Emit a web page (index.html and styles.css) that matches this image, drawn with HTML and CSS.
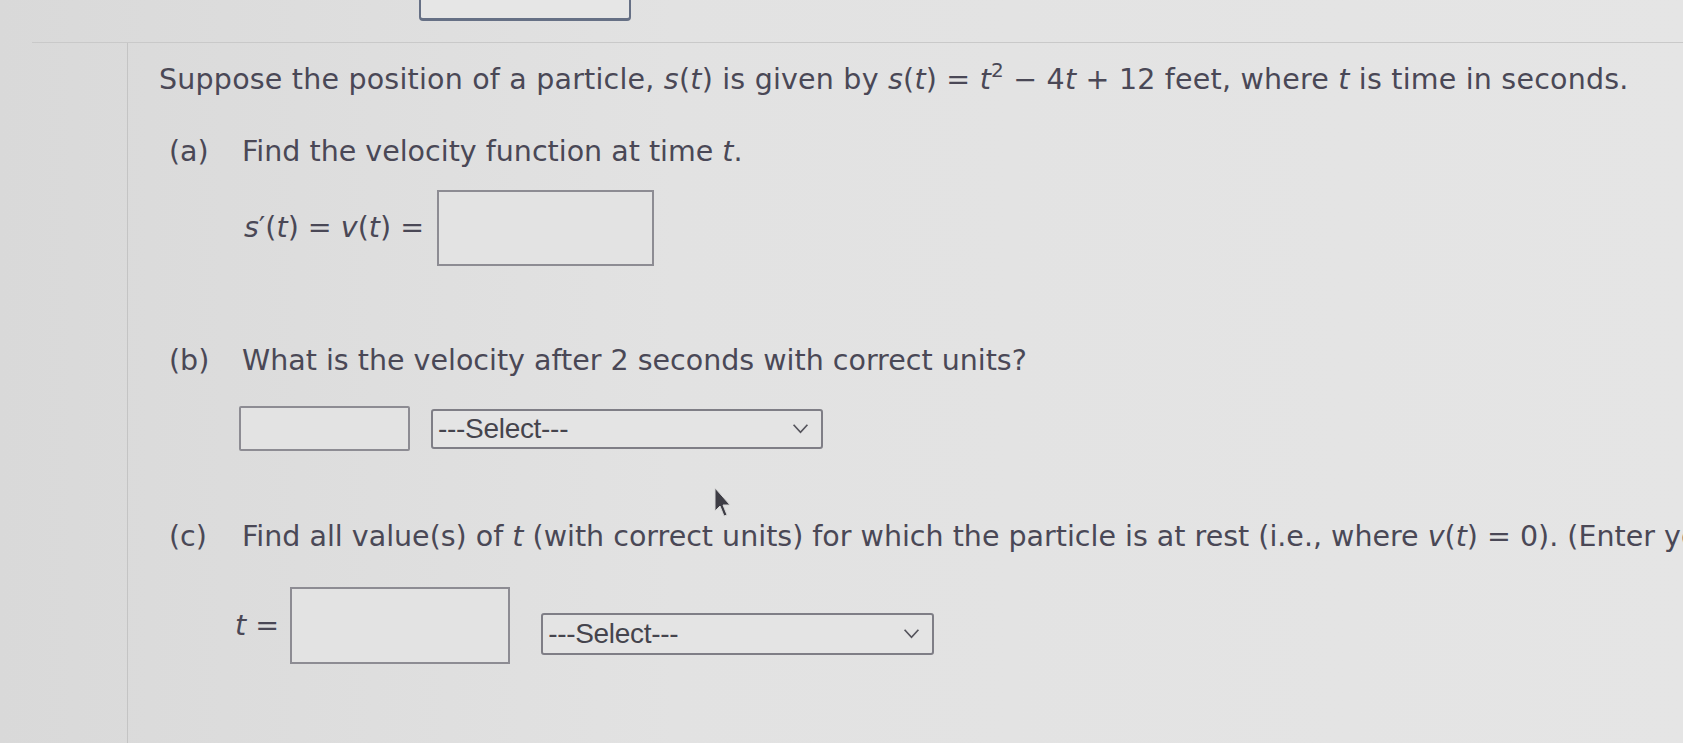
FILE: index.html
```html
<!DOCTYPE html>
<html>
<head>
<meta charset="utf-8">
<link rel="stylesheet" href="styles.css">
</head>
<body>
<div class="page">
  <div class="topbar">
    <div class="tab"></div>
  </div>
  <div class="main">
    <div class="gutter"></div>
    <div class="content">
      <p class="intro">Suppose the position of a particle, <i>s</i>(<i>t</i>) is given by <i>s</i>(<i>t</i>) = <i>t</i><sup>2</sup> − 4<i>t</i> + 12 feet, where <i>t</i> is time in seconds.</p>

      <div class="part part-a">
        <span class="lbl">(a)</span>
        <span class="txt">Find the velocity function at time <i>t</i>.</span>
      </div>
      <div class="row row-a">
        <span class="eq"><i>s</i>′(<i>t</i>) = <i>v</i>(<i>t</i>) =</span>
        <span class="box box-a"></span>
      </div>

      <div class="part part-b">
        <span class="lbl">(b)</span>
        <span class="txt">What is the velocity after 2 seconds with correct units?</span>
      </div>
      <div class="row row-b">
        <span class="box box-b"></span>
        <div class="select sel-b"><span>---Select---</span>
          <svg class="chev" viewBox="0 0 16 10" width="17" height="11"><path d="M1.5 1.5 L8 8.5 L14.5 1.5" fill="none" stroke="#55545c" stroke-width="1.6"/></svg>
        </div>
      </div>

      <div class="part part-c">
        <span class="lbl">(c)</span>
        <span class="txt">Find all value(s) of <i>t</i> (with correct units) for which the particle is at rest (i.e., where <i>v</i>(<i>t</i>) = 0). (Enter your answers as a comma-separated list.)</span>
      </div>
      <div class="row row-c">
        <span class="eq"><i>t</i> =</span>
        <span class="box box-c"></span>
        <div class="select sel-c"><span>---Select---</span>
          <svg class="chev" viewBox="0 0 16 10" width="17" height="11"><path d="M1.5 1.5 L8 8.5 L14.5 1.5" fill="none" stroke="#55545c" stroke-width="1.6"/></svg>
        </div>
      </div>
    </div>
  </div>
  <svg class="cursor" viewBox="0 0 20 32" width="20" height="32"><path d="M2 1 L2 24 L7 19 L11 29 L14 28 L10 18 L17 18 Z" fill="#3e3d45" stroke="#d8d8d8" stroke-width="1"/></svg>
</div>
</body>
</html>
```

FILE: styles.css
```css
html, body {
  margin: 0;
  padding: 0;
}
body {
  background: #dedede;
  width: 1683px;
  height: 743px;
  overflow: hidden;
  font-family: "DejaVu Sans", Verdana, sans-serif;
  color: #4a4856;
}
.page {
  position: relative;
  width: 1683px;
  height: 743px;
  background: linear-gradient(90deg, #d9d9d9 0%, #e2e2e2 40%, #e5e5e5 100%);
}
.topbar {
  height: 43px;
  margin-left: 32px;
  border-bottom: 1px solid #c9c9c9;
  box-sizing: border-box;
}
.tab {
  margin-left: 387px;
  width: 212px;
  height: 21px;
  border: 2px solid #667085;
  border-top: none;
  border-bottom-width: 3px;
  border-radius: 0 0 4px 4px;
  box-sizing: border-box;
  background: #e6e6e6;
}
.main {
  display: flex;
  height: 700px;
}
.gutter {
  width: 127px;
  border-right: 1px solid #c4c4c4;
  flex: none;
}
.content {
  flex: 1;
  padding-left: 31px;
  white-space: nowrap;
  overflow: hidden;
  font-size: 28.5px;
}
.intro {
  margin: 22px 0 0 0;
  line-height: 30px;
  letter-spacing: 0.2px;
}
sup {
  font-size: 20px;
  line-height: 0;
  vertical-align: 12px;
}
.part {
  display: flex;
  line-height: 30px;
}
.lbl {
  width: 73px;
  padding-left: 10px;
  flex: none;
}
.part-a { margin-top: 42px; }
.row {
  display: flex;
  align-items: center;
}
.row-a {
  margin-top: 23px;
  padding-left: 85px;
  height: 76px;
}
.eq {
  line-height: 30px;
}
.row-a .eq { margin-right: 13px; }
.box {
  display: block;
  border: 2px solid #8d8c93;
  background: #e3e3e3;
  box-sizing: border-box;
  flex: none;
}
.box-a { width: 217px; height: 76px; }
.part-b { margin-top: 80px; }
.row-b {
  margin-top: 30px;
  padding-left: 80px;
  height: 45px;
}
.box-b { width: 171px; height: 45px; border-radius: 2px; }
.select {
  display: flex;
  align-items: center;
  justify-content: space-between;
  border: 2px solid #7f7e86;
  border-radius: 3px;
  background: #e4e4e4;
  box-sizing: border-box;
  font-family: "Liberation Sans", Arial, sans-serif;
  font-size: 28px;
  letter-spacing: -0.3px;
  color: #45444d;
  padding: 0 12px 0 5px;
}
.sel-b { margin-left: 21px; width: 392px; height: 40px; }
.part-c { margin-top: 71px; }
.row-c {
  margin-top: 35px;
  padding-left: 76px;
  height: 77px;
}
.row-c .eq { margin-right: 11px; }
.box-c { width: 220px; height: 77px; }
.sel-c { margin-left: 31px; width: 393px; height: 42px; margin-top: 16px; }
.cursor {
  position: absolute;
  left: 713px;
  top: 487px;
}
```
